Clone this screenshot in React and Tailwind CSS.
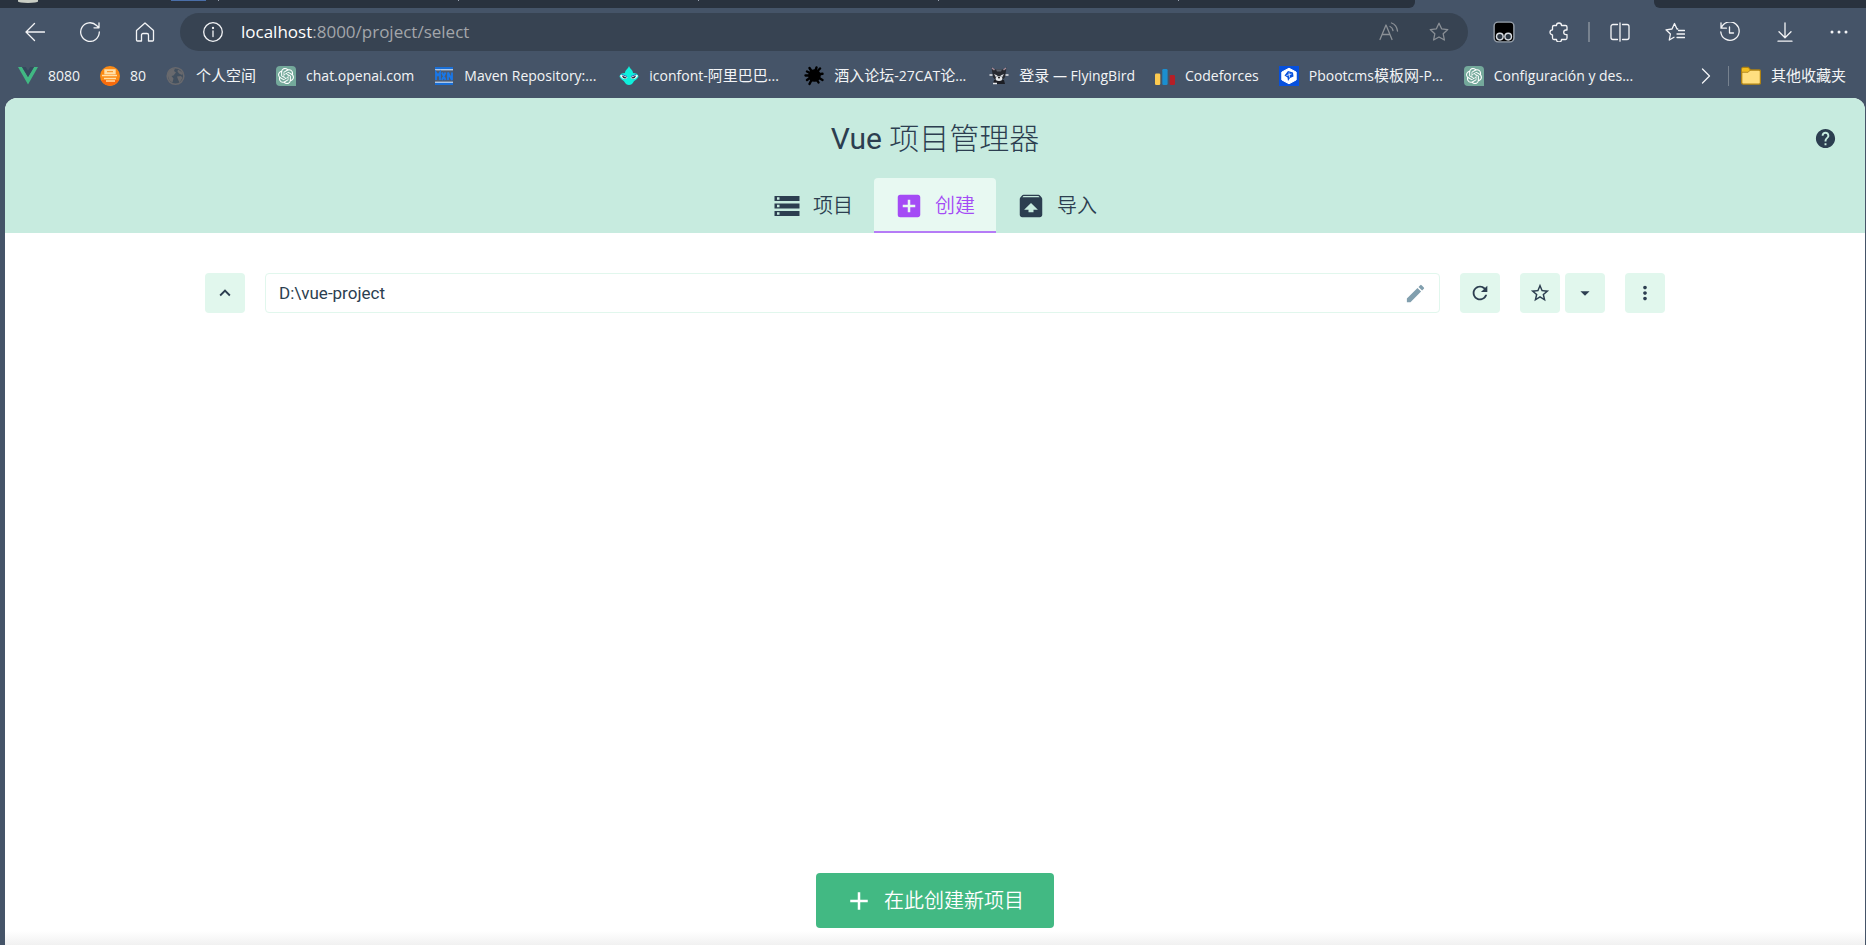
import React from "react";
import {
  MdAdd, MdAddBox, MdArrowDropDown, MdEdit, MdHelp, MdKeyboardArrowUp,
  MdMoreVert, MdRefresh, MdStarBorder, MdStorage,
} from "react-icons/md";
import { SiOpenai } from "react-icons/si";

function Line({ children, className = "", size = 20 }) {
  return (
    <svg
      aria-hidden="true"
      width={size}
      height={size}
      viewBox="0 0 20 20"
      fill="none"
      stroke="currentColor"
      strokeWidth="1.3"
      strokeLinecap="round"
      strokeLinejoin="round"
      className={`shrink-0 ${className}`}
    >
      {children}
    </svg>
  );
}

const STAR = "M10 1.2l2.6 5.6 6.2.8-4.6 4.2 1.2 6.2L10 15l-5.4 3 1.2-6.2L1.2 7.6l6.2-.8z";

const BackIcon = () => (
  <Line><path d="M19.5 10H1M9.5 1.5L1 10l8.500 8.500" /></Line>
);
const ReloadIcon = () => (
  <Line><path d="M19.3 10A9.300 9.300 0 1 1 16.600 3.500L18.800 5.700M19 .8v5h-5" /></Line>
);
const HomeIcon = () => (
  <Line><path d="M1.500 8.500L10 1l8.500 7.500V18a1 1 0 0 1-1 1h-4v-6a1.500 1.500 0 0 0-1.500-1.500H8A1.500 1.500 0 0 0 6.500 13v6h-4a1 1 0 0 1-1-1z" /></Line>
);
const InfoIcon = () => (
  <Line className="text-gray-100">
    <circle cx="10" cy="10" r="9.300" />
    <path d="M10 9v5.500" />
    <circle cx="10" cy="6" r=".5" fill="currentColor" />
  </Line>
);
const ReadAloudIcon = () => (
  <Line className="text-[#8b9096]">
    <path d="M1 17.500L7 3l6 14.500M3.200 12.500h7.600M11 4.500c1.500.6 2.600 2 3 4M12.500 1c3 1 5.500 4 6 8" />
  </Line>
);
const StarIcon = () => (
  <Line className="text-[#8b9096]"><path d={STAR} /></Line>
);
const MonkeyIcon = () => (
  <Line size={22}>
    <rect x="1" y="1" width="18" height="18" rx="3.500" fill="#000" stroke="#98a1ac" />
    <circle cx="6.200" cy="14.200" r="3" fill="#2b3540" stroke="#d9dde2" />
    <circle cx="13.800" cy="14.200" r="3" fill="#2b3540" stroke="#d9dde2" />
  </Line>
);
const PuzzleIcon = () => (
  <Line>
    <path d="M7.500 3.500a2.500 2.500 0 0 1 5 0H16.500a1.500 1.500 0 0 1 1.500 1.500v3h-1a2.300 2.300 0 0 0 0 4.600h1V16a1.500 1.500 0 0 1-1.500 1.500h-4a2.500 2.500 0 0 1-5 0H5A1.500 1.500 0 0 1 3.500 16v-3.200a2.500 2.500 0 0 1 0-5V5A1.500 1.500 0 0 1 5 3.500z" />
  </Line>
);
const SplitIcon = () => (
  <Line>
    <path d="M7.500 2.500H3A2 2 0 0 0 1 4.500v11a2 2 0 0 0 2 2h4.500M12.500 2.500H17a2 2 0 0 1 2 2v11a2 2 0 0 1-2 2h-4.500M10 .8v18.400" />
  </Line>
);
const FavoritesIcon = () => (
  <Line>
    <path d="M12.800 7H12L9.500 1.500 7 7l-6 .8 4.400 4.200L4.300 18l4.700-2.700M13.500 8.500h6M12 12h7.500M12 15.500h7.500" />
  </Line>
);
const HistoryIcon = () => (
  <Line>
    <path d="M1 .8v5.400h5.400M1.300 6A9.200 9.200 0 1 1 .8 10M9.500 5v6h4" />
  </Line>
);
const DownloadIcon = () => (
  <Line><path d="M10 .8v14.700M4 9.800l6 6 6-6M3 19.200h14" /></Line>
);
const MoreIcon = () => (
  <Line>
    <g fill="currentColor" stroke="none">
      <circle cx="3" cy="10" r="1.500" />
      <circle cx="10" cy="10" r="1.500" />
      <circle cx="17" cy="10" r="1.500" />
    </g>
  </Line>
);

function Pic({ children }) {
  return (
    <svg aria-hidden="true" width="20" height="20" viewBox="0 0 20 20" className="shrink-0">
      {children}
    </svg>
  );
}

const VueLogo = () => (
  <Pic>
    <path d="M0 1h4l6 10 6-10h4L10 18.500z" fill="#41b883" />
    <path d="M4 1h3.800L10 4.700 12.200 1H16l-6 10z" fill="#35495e" />
  </Pic>
);
const OrangeLogo = () => (
  <Pic>
    <circle cx="10" cy="10" r="10" fill="#fb8a14" />
    <path d="M1 14a10 10 0 0 0 18 0z" fill="#f86a0c" />
    <path d="M5 4h10v3.500H5zM2 9.500h15M4 12.500h12M6 15h9" fill="#ffe0a8" stroke="#ffe0a8" strokeWidth="1.400" />
    <path d="M7 5.700h6" stroke="#fb8a14" />
  </Pic>
);
const GlobeLogo = () => (
  <Pic>
    <circle cx="9.500" cy="10" r="8.300" fill="#42505f" stroke="#68696d" strokeWidth="1.600" />
    <path d="M2 7c2-4 5-5 7-4.500L8 5l2 1.500-2.500 3-2 .5 2 2.500-1 4C3 15 1.500 11 2 7zM12 3.500l5 3.500-1 2-3-1.500-1.500-2zM11 10.500l4-.5 1.500 2-3 4.500-1.500-3z" fill="#68696d" />
  </Pic>
);
const OpenAiLogo = () => (
  <span className="flex size-5 shrink-0 items-center justify-center rounded-t rounded-bl bg-[#74a99b] text-white">
    <SiOpenai size={16} aria-hidden="true" />
  </span>
);
const MavenLogo = () => (
  <Pic>
    <path d="M1 1h18v18H1z" fill="#1a6fd6" />
    <path d="M1 4h18v12H1z" fill="#4b5b72" />
    <path d="M1 3.800h18M1 16.200h18" stroke="#e8eef6" strokeWidth="1" />
    <path d="M2 14V6.500l2 3 2-3V14M8 6.500l3.500 7.500M11.500 6.500L8 14M14 14V6.500l4 7.500V6.500" fill="none" stroke="#1977e8" strokeWidth="1.800" />
  </Pic>
);
const IconfontLogo = () => (
  <Pic>
    <path d="M10 0c1 3 4 4 4 7 3 0 5 1 5.500 3.500-1 3-4 3.500-5 5.500-1 2-2.500 3-4.500 3s-3.500-1-4.500-3c-1-2-4-2.500-5-5.500C1 8 3 7 6 7c0-3 3-4 4-7z" fill="#0ff0dc" />
    <path d="M.8 9.500c3-1.500 6 0 7.700 2-1.500 2-5 2.500-7.700-2zM19.200 9.500c-3-1.500-6 0-7.700 2 1.500 2 5 2.500 7.700-2z" fill="#fff" />
    <path d="M3 9.500l5 2.200c-2 1.500-4.500.8-5-2.200zM17 9.500l-5 2.200c2 1.500 4.500.8 5-2.200z" fill="#243240" />
    <path d="M3 8.500l5 2M17 8.500l-5 2" stroke="#2f6fc0" />
  </Pic>
);
const SplatLogo = () => (
  <Pic>
    <circle cx="10.500" cy="9.500" r="6.300" />
    <path d="M10 9L5.500 2M10 9l2.500-7.500M10 9l6-6.500M10 9l8.500-1.200M10 9l8.500 5M10 9l4.500 7.500M10 9L5.500 18M10 9L3 14M10 9L1.500 9.500M10 9L3 5.500" stroke="#000" strokeWidth="2.400" strokeLinecap="round" />
  </Pic>
);
const CatLogo = () => (
  <Pic>
    <path d="M2.500 1.500L6 3.500h8l3.500-2-1 6.500c0 5-3 6-6.500 6S3.500 13 3.500 8z" fill="#272a31" />
    <path d="M3 2l2.500 2M17 2l-2.500 2" stroke="#a58b97" strokeWidth="1.500" />
    <path d="M7 3.500h6l-1 2H8z" fill="#5b606b" />
    <path d="M5 8l3.500 1.500L7 11.500zM15 8l-3.500 1.500L13 11.500z" fill="#d5d8dc" />
    <path d="M5 14h10l1 4H4z" fill="#1c1e24" />
    <ellipse cx="10" cy="12.500" rx="3.300" ry="2.500" fill="#e6e8ea" />
    <circle cx="10" cy="11.500" r=".9" />
    <path d="M.5 9h3M16.500 9h3M4 17.500h4" stroke="#e6e8ea" strokeWidth="1.500" />
  </Pic>
);
const CodeforcesLogo = () => (
  <Pic>
    <rect x="0" y="7.500" width="5.300" height="11.500" rx="1.300" fill="#fcca50" />
    <rect x="7.300" y="3" width="5.300" height="16" rx="1.300" fill="#1b8fd0" />
    <rect x="14.700" y="9" width="5.300" height="10" rx="1.300" fill="#b71f26" />
  </Pic>
);
const PbootLogo = () => (
  <Pic>
    <path d="M0 0h20v20H0z" fill="#0750dc" />
    <path d="M10 2.200l7.200 3.900v7.800L10 17.800l-7.200-3.900V6.100z" fill="#fff" stroke="#fff" strokeLinejoin="round" />
    <path d="M5.500 9.500L9 5l5 1.500.5 4L11 12l-2 3-.5-3.500z" fill="#0750dc" />
    <path d="M7.500 9.500l5-1.500M10 6.500l.5 5" stroke="#fff" strokeWidth=".8" />
  </Pic>
);
const FolderIcon = () => (
  <Pic>
    <path d="M.7 3a1.500 1.500 0 0 1 1.500-1.500h5L9.500 4H18a1.400 1.400 0 0 1 1.400 1.400v11.400a1.400 1.400 0 0 1-1.400 1.400H2.100a1.400 1.400 0 0 1-1.400-1.400z" fill="#ffdf80" stroke="#b08210" strokeWidth="1.300" />
    <path d="M1.300 3a1 1 0 0 1 1-1H7l1.700 2-1.500 1.800H1.300z" fill="#f2bd1d" />
    <path d="M1 6.200h6.200L9.300 4" fill="none" stroke="#b08210" />
  </Pic>
);

const BOOKMARKS = [
  [VueLogo, "8080"],
  [OrangeLogo, "80"],
  [GlobeLogo, "个人空间"],
  [OpenAiLogo, "chat.openai.com"],
  [MavenLogo, "Maven Repository:..."],
  [IconfontLogo, "iconfont-阿里巴巴..."],
  [SplatLogo, "酒入论坛-27CAT论..."],
  [CatLogo, "登录 — FlyingBird"],
  [CodeforcesLogo, "Codeforces"],
  [PbootLogo, "Pbootcms模板网-P..."],
  [OpenAiLogo, "Configuración y des..."],
];

// Chinese runs are set one pixel larger than the Latin text around them.
function MixedText({ text }) {
  return text.split(/([\u4e00-\u9fff]+)/).map((run, i) =>
    i % 2 ? <span key={i} className="text-[15px]">{run}</span> : run
  );
}

function ToolButton({ label, icon: Icon, className = "w-[55px]" }) {
  return (
    <button type="button" aria-label={label} className={`flex h-9 shrink-0 items-center justify-center ${className}`}>
      <Icon />
    </button>
  );
}

function TabStrip() {
  return (
    <div className="flex h-2">
      <div className="flex flex-1 items-start overflow-hidden rounded-br-md bg-[#29323e]">
        <span className="ml-[18px] h-[3px] w-5 rounded-b-[50%] bg-[#c9cdc4]" />
        <span className="ml-[133px] h-px w-[35px] bg-[#4a6ea8]" />
        <span className="ml-3 h-px w-px bg-gray-400" />
        <span className="ml-[239px] h-px w-px bg-gray-400" />
        <span className="ml-[239px] h-px w-px bg-gray-400" />
        <span className="ml-[239px] h-px w-px bg-gray-400" />
        <span className="ml-[239px] h-px w-px bg-gray-400" />
      </div>
      <div className="w-[239px]" />
      <div className="w-[212px] rounded-bl-md bg-[#29323e]" />
    </div>
  );
}

function Toolbar() {
  return (
    <div className="flex h-12 items-center pl-[7px] text-gray-100">
      <ToolButton label="后退" icon={BackIcon} />
      <ToolButton label="刷新" icon={ReloadIcon} />
      <ToolButton label="主页" icon={HomeIcon} />
      <div className="mx-2 flex h-[38px] min-w-0 flex-1 items-center rounded-full bg-[#374352] pr-1 pl-[23px]">
        <InfoIcon />
        <div
          role="textbox"
          aria-label="地址栏"
          contentEditable
          suppressContentEditableWarning
          spellCheck={false}
          className="ml-[18px] min-w-0 flex-1 truncate text-[17px] leading-6 text-[#a3a6aa] outline-none"
        >
          <span className="text-white">localhost</span>:8000/project/select
        </div>
        <ToolButton label="大声朗读" icon={ReadAloudIcon} className="w-[50px]" />
        <ToolButton label="收藏此页" icon={StarIcon} className="w-[50px]" />
      </div>
      <ToolButton label="Tampermonkey" icon={MonkeyIcon} />
      <ToolButton label="扩展" icon={PuzzleIcon} />
      <div className="flex w-1.5 justify-center">
        <span className="h-5 w-0.5 bg-[#77828f]" />
      </div>
      <ToolButton label="分屏" icon={SplitIcon} />
      <ToolButton label="收藏夹" icon={FavoritesIcon} />
      <ToolButton label="历史记录" icon={HistoryIcon} />
      <ToolButton label="下载" icon={DownloadIcon} />
      <ToolButton label="设置及其他" icon={MoreIcon} className="w-[54px]" />
    </div>
  );
}

function BookmarkBar() {
  return (
    <nav aria-label="收藏夹栏" className="mb-0.5 flex h-10 items-center gap-5 pr-5 pl-[18px] text-sm text-gray-100">
      {BOOKMARKS.map(([Icon, label]) => (
        <a key={label} href="#" className="flex shrink-0 items-center gap-2.5 whitespace-nowrap">
          <Icon />
          <span className={label.endsWith("...") ? "min-w-[135px]" : ""}>
            <MixedText text={label} />
          </span>
        </a>
      ))}
      <div className="ml-auto flex items-center">
        <button type="button" aria-label="更多收藏" className="mr-3">
          <Line><path d="M6.500 3l7 7-7 7" /></Line>
        </button>
        <span className="mr-3 h-5 w-px bg-[#77828f]" />
        <a href="#" className="flex items-center gap-2.5 whitespace-nowrap text-[15px]">
          <FolderIcon />
          其他收藏夹
        </a>
      </div>
    </nav>
  );
}

const UnarchiveIcon = ({ size }) => (
  <svg aria-hidden="true" width={size} height={size} viewBox="0 0 24 24" fill="currentColor">
    <path d="M20.550 5.220l-1.390-1.680C18.880 3.210 18.470 3 18 3H6c-.47 0-.88.210-1.150.550L3.460 5.220C3.170 5.570 3 6.010 3 6.500V19c0 1.100.890 2 2 2h14c1.100 0 2-.9 2-2V6.500c0-.49-.17-.93-.45-1.280zM12 9.500l5.500 5.500H14v2h-4v-2H6.500L12 9.500zM5.120 5l.820-1h12l.930 1H5.120z" />
  </svg>
);

const TABS = [
  [MdStorage, "项目", false],
  [MdAddBox, "创建", true],
  [UnarchiveIcon, "导入", false],
];

function Header() {
  return (
    <header className="flex flex-col bg-[#c7ebdf]">
      <div className="grid h-20 grid-cols-[1fr_auto_1fr] items-center">
        <h1 className="col-start-2 pt-0.5 text-3xl font-light">
          <span className="font-normal">Vue</span> 项目管理器
        </h1>
        <button type="button" aria-label="帮助" className="mr-7 justify-self-end">
          <MdHelp size={23} />
        </button>
      </div>
      <nav className="flex justify-center">
        {TABS.map(([Icon, label, active]) => (
          <a
            key={label}
            href="#"
            aria-current={active ? "page" : undefined}
            className={`flex h-[55px] items-center gap-[11px] rounded-t border-b-2 pt-0.5 pr-[21px] pl-5 text-xl font-[350] ${
              active ? "border-[#b57bf6] bg-[#e8f9f2] text-[#a44bf5]" : "border-transparent"
            }`}
          >
            <Icon size={30} />
            {label}
          </a>
        ))}
      </nav>
    </header>
  );
}

function SquareButton({ label, icon: Icon }) {
  return (
    <button type="button" aria-label={label} className="flex size-10 shrink-0 items-center justify-center rounded bg-[#e1f7ed]">
      <Icon size={22} />
    </button>
  );
}

export default function App() {
  return (
    <div className="flex h-screen flex-col bg-[#455468] font-['Open_Sans','Noto_Sans_CJK_SC',sans-serif]">
      <TabStrip />
      <Toolbar />
      <BookmarkBar />
      <div className="mr-px ml-[5px] flex min-h-0 flex-1 flex-col overflow-hidden rounded-t-xl bg-white font-[Roboto,'Noto_Sans_CJK_SC',sans-serif] text-[#2c3e50]">
        <Header />
        <main className="flex flex-1 flex-col">
          <div className="flex items-center gap-5 px-[200px] pt-10">
            <SquareButton label="上级目录" icon={MdKeyboardArrowUp} />
            <div className="flex h-10 min-w-0 flex-1 items-center rounded border border-[#e1f7ed] pr-3 pl-[13px]">
              <input
                type="text"
                aria-label="当前路径"
                defaultValue="D:\vue-project"
                className="min-w-0 flex-1 bg-transparent pt-0.5 text-[17px] outline-none"
              />
              <button type="button" aria-label="编辑路径" className="text-[#819fae]">
                <MdEdit size={23} />
              </button>
            </div>
            <SquareButton label="刷新目录" icon={MdRefresh} />
            <div className="flex gap-[5px]">
              <SquareButton label="收藏目录" icon={MdStarBorder} />
              <SquareButton label="收藏列表" icon={MdArrowDropDown} />
            </div>
            <SquareButton label="更多操作" icon={MdMoreVert} />
          </div>
          <div className="mt-auto flex flex-col items-center">
            <button type="button" className="flex h-[55px] items-center gap-2.5 rounded bg-[#42b983] pr-[30px] pl-7 text-xl font-[350] text-white">
              <MdAdd size={30} />
              在此创建新项目
            </button>
            <div className="mt-[3px] h-3.5 w-full bg-linear-to-b from-white to-[#f1f1f1]" />
          </div>
        </main>
      </div>
    </div>
  );
}
